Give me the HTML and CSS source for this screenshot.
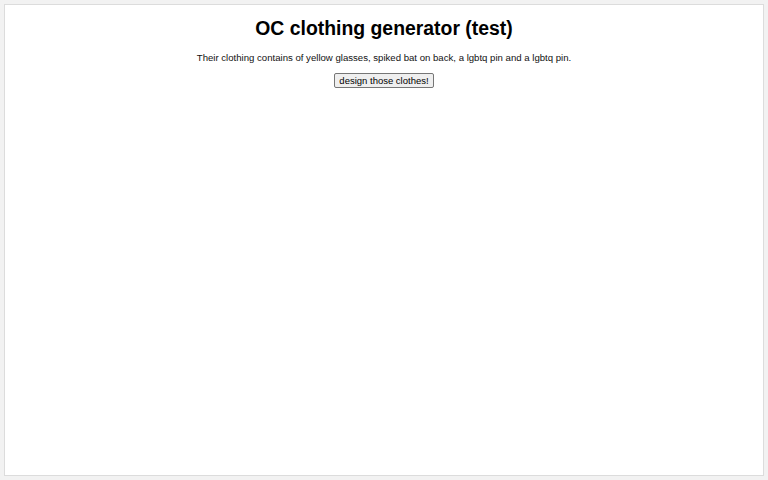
FILE: index.html
```html
<!DOCTYPE html>
<html lang="en">
<head>
    <meta charset="UTF-8">
    <meta name="viewport" content="width=device-width, initial-scale=1.0">
    <title>OC clothing generator (test)</title>
    <link rel="stylesheet" href="styles.css">
</head>
<body>
    <div class="page-frame">
        <h1>OC clothing generator (test)</h1>
        <p id="outfit">Their clothing contains of yellow glasses, spiked bat on back, a lgbtq pin and a lgbtq pin.</p>
        <button class="design-button" type="button">design those clothes!</button>
    </div>
</body>
</html>
```

FILE: styles.css
```css
* {
    margin: 0;
    padding: 0;
    box-sizing: border-box;
    font-family: "Liberation Sans", Arial, sans-serif;
}

body {
    background-color: #f2f2f2;
    padding: 4px;
    height: 100vh;
}

.page-frame {
    background-color: white;
    border: 1px solid #dcdcdc;
    height: 472px;
    text-align: center;
    padding-top: 12px;
}

.page-frame h1 {
    font-size: 19.4px;
    color: #000;
    margin-bottom: 12px;
}

.page-frame p {
    font-size: 9.6px;
    color: #111;
    margin-bottom: 7px;
}

.design-button {
    font-size: 9.5px;
    padding: 1px 4px;
    border: 1px solid #767676;
    border-radius: 2px;
    background-color: #efefef;
    color: #000;
}
```
